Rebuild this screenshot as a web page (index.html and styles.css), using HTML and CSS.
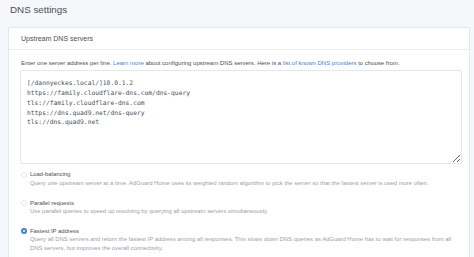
FILE: index.html
```html
<!DOCTYPE html>
<html lang="en">

<head>
    <meta charset="UTF-8">
    <meta name="viewport" content="width=device-width, initial-scale=1.0">
    <title>DNS settings</title>
    <link rel="stylesheet" href="styles.css">
</head>

<body>
    <div class="page-header">
        <h1 class="page-title">DNS settings</h1>
    </div>

    <div class="card">
        <div class="card-header">
            <h3 class="card-title">Upstream DNS servers</h3>
        </div>
        <div class="card-body">
            <div class="form-desc">
                Enter one server address per line. <a href="#">Learn more</a> about configuring upstream DNS servers.
                Here is a <a href="#">list of known DNS providers</a> to choose from.
            </div>
            <textarea class="form-control" id="upstream_dns">[/dannyeckes.local/]10.0.1.2
https://family.cloudflare-dns.com/dns-query
tls://family.cloudflare-dns.com
https://dns.quad9.net/dns-query
tls://dns.quad9.net</textarea>

            <div class="options">
                <label class="custom-radio">
                    <span class="radio-mark"></span>
                    <span class="radio-text">
                        <span class="radio-title">Load-balancing</span>
                        <span class="radio-desc">Query one upstream server at a time. AdGuard Home uses its weighted random algorithm to pick the server so that the fastest server is used more often.</span>
                    </span>
                </label>
                <label class="custom-radio">
                    <span class="radio-mark"></span>
                    <span class="radio-text">
                        <span class="radio-title">Parallel requests</span>
                        <span class="radio-desc">Use parallel queries to speed up resolving by querying all upstream servers simultaneously.</span>
                    </span>
                </label>
                <label class="custom-radio checked">
                    <span class="radio-mark"></span>
                    <span class="radio-text">
                        <span class="radio-title">Fastest IP address</span>
                        <span class="radio-desc">Query all DNS servers and return the fastest IP address among all responses. This slows down DNS queries as AdGuard Home has to wait for responses from all DNS servers, but improves the overall connectivity.</span>
                    </span>
                </label>
            </div>
        </div>
    </div>
</body>

</html>
```

FILE: styles.css
```css
body {
    font-family: "Liberation Sans", Arial, sans-serif;
    margin: 0;
    padding: 0;
    background-color: #f5f7fb;
    color: #495057;
    overflow: hidden;
}

.page-header {
    height: 27px;
    display: flex;
    align-items: center;
    padding: 0 10px;
    margin-top: -4px;
}

.page-title {
    margin: 0;
    font-size: 9.8px;
    font-weight: 400;
    color: #495057;
}

.card {
    margin: 4px 4px 0 8px;
    background-color: #fff;
    border: 1px solid #e3e7ee;
    border-radius: 2px;
}

.card-header {
    height: 21px;
    display: flex;
    align-items: center;
    padding: 0 12px;
    border-bottom: 1px solid #e9ecf1;
}

.card-title {
    margin: 0;
    font-size: 7px;
    font-weight: 400;
    color: #495057;
}

.card-body {
    padding: 9px 7px 0 11px;
}

.form-desc {
    font-size: 6px;
    line-height: 8.4px;
    margin: 0 0 3px 1px;
    color: #495057;
}

a {
    color: #467fcf;
    text-decoration: none;
}

.form-control {
    display: block;
    box-sizing: border-box;
    width: 100%;
    height: 94px;
    padding: 7px 6px;
    border: 1px solid #e3e7ee;
    border-radius: 2px;
    font-family: "DejaVu Sans Mono", monospace;
    font-size: 6.3px;
    line-height: 9.7px;
    color: #495057;
    background-color: #fff;
    resize: vertical;
}

.options {
    padding: 6px 0 0 0;
    margin-right: -1px;
}

.custom-radio {
    display: flex;
    align-items: flex-start;
    margin-bottom: 11px;
    cursor: pointer;
}

.radio-mark {
    flex: none;
    box-sizing: border-box;
    width: 6px;
    height: 6px;
    margin: 1.5px 3px 0 1px;
    border: 1px solid #e3e7ee;
    border-radius: 50%;
    background-color: #fff;
}

.custom-radio.checked .radio-mark {
    border: 2px solid #467fcf;
}

.radio-text {
    display: flex;
    flex-direction: column;
    font-size: 5.9px;
    line-height: 8.6px;
}

.radio-title {
    color: #495057;
}

.radio-desc {
    color: #9aa0ac;
}
```
